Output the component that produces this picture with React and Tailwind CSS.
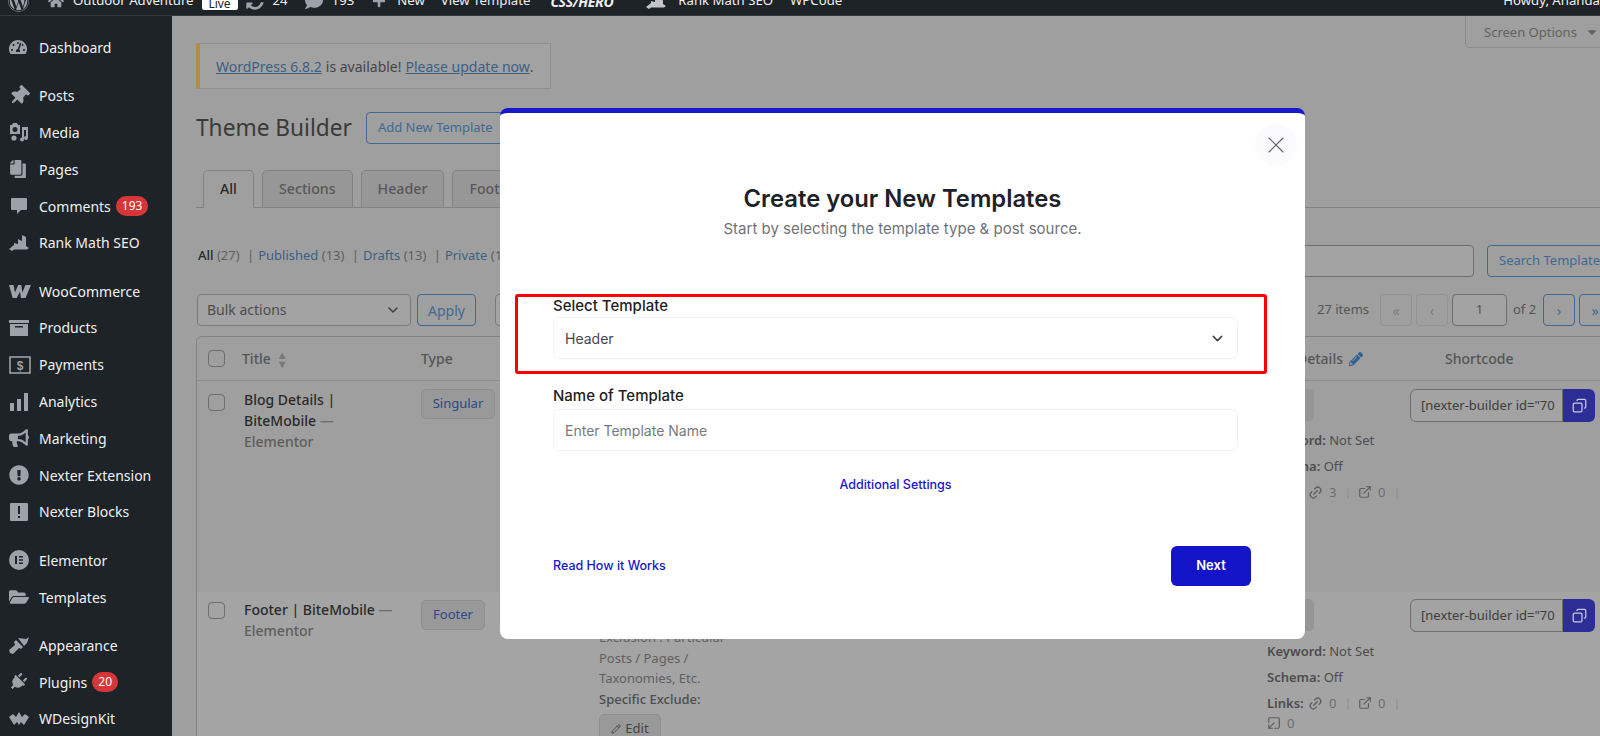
import React from 'react';
import { ChevronDown, X, Link2, ExternalLink, Copy, Pencil, ArrowDownLeftFromSquare } from 'lucide-react';
import {
    FaWordpress, FaHome, FaSyncAlt, FaComment, FaPlus, FaTachometerAlt, FaThumbtack, FaCopy,
    FaBullhorn, FaExclamationCircle, FaFolderOpen, FaPlug, FaPencilAlt, FaCaretDown,
} from 'react-icons/fa';

const RankIcon = ({ className }) => (
    <svg viewBox="0 0 20 20" className={className} fill="currentColor">
        <path d="M0 16l5-4v-2l4 1V6l4 2V2l4 2v9l3 2-2 1.500H5L3 18z" />
    </svg>
);
const MediaIcon = () => (
    <svg viewBox="0 0 20 20" className="w-5 h-5" fill="currentColor">
        <path d="M1 3h2l1-2h4l1 2h2v9H1zm5 2a2.500 2.500 0 100 5 2.500 2.500 0 000-5z" fillRule="evenodd" />
        <path d="M13 5h6v11a2 2 0 11-2-2V8h-2v9.500a2 2 0 11-2-2z" />
        <circle cx="5" cy="16" r="2.600" />
    </svg>
);
const CommentIcon = () => (
    <svg viewBox="0 0 20 20" className="w-5 h-5" fill="currentColor">
        <path d="M3 2h14a1 1 0 011 1v10a1 1 0 01-1 1h-5l-4 4v-4H3a1 1 0 01-1-1V3a1 1 0 011-1z" />
    </svg>
);
const WooIcon = () => (
    <svg viewBox="0 0 24 14" className="w-[22px] h-[13px]" fill="currentColor">
        <path d="M0 0h5l1.500 8L10 0h3.500l1 8L18 0h6l-6 14h-5l-1-7-3.500 7H4z" />
    </svg>
);
const BoxIcon = () => (
    <svg viewBox="0 0 20 20" className="w-5 h-5" fill="currentColor">
        <path d="M0 2h20v3H0zM1 6h18v12H1zm5 2v1.500h8V8z" fillRule="evenodd" />
    </svg>
);
const PaymentIcon = () => (
    <svg viewBox="0 0 22 18" className="w-[22px] h-[18px]">
        <rect x="1" y="1" width="20" height="16" fill="none" stroke="currentColor" strokeWidth="1.600" />
        <text x="11" y="14" textAnchor="middle" fontSize="12" fontWeight="700" fill="currentColor" fontFamily="Liberation Sans, sans-serif">$</text>
    </svg>
);
const BarsIcon = () => (
    <svg viewBox="0 0 20 20" className="w-5 h-5" fill="currentColor">
        <path d="M1 11h4v8H1zM8 7h4v12H8zM15 1h4v18h-4z" />
    </svg>
);
const SquareAlert = () => (
    <svg viewBox="0 0 20 20" className="w-5 h-5" fill="currentColor">
        <path fillRule="evenodd" d="M2 1h16a1 1 0 011 1v16a1 1 0 01-1 1H2a1 1 0 01-1-1V2a1 1 0 011-1zm7 3v8h2V4zm0 10v2h2v-2z" />
    </svg>
);
const ElementorIcon = () => (
    <svg viewBox="0 0 20 20" className="w-5 h-5" fill="currentColor">
        <path fillRule="evenodd" d="M10 0a10 10 0 100 20 10 10 0 000-20zM6 6h2v8H6zm4 0h4v1.600h-4zm0 3.200h4v1.600h-4zm0 3.200h4V14h-4z" />
    </svg>
);
const KitIcon = () => (
    <svg viewBox="0 0 20 14" className="w-5 h-[14px]" fill="currentColor">
        <path d="M0 5l4-3 3 3 3-5 3 5 3-3 4 3-5 8-3-3-2 3-2-3-3 3z" />
    </svg>
);
const BrushIcon = () => (
    <svg viewBox="0 0 20 20" className="w-5 h-5" fill="currentColor">
        <path d="M9 3l8 1 3-2-2 6-3 3zM7 5l7 7-2 2-2-1-6 6-3-1-1-3 6-5-1-3z" />
    </svg>
);

const menuGroups = [
    [{ label: 'Dashboard', icon: <FaTachometerAlt className="w-[18px] h-[18px]" /> }],
    [
        { label: 'Posts', icon: <FaThumbtack className="w-5 h-5 rotate-45" /> },
        { label: 'Media', icon: <MediaIcon /> },
        { label: 'Pages', icon: <FaCopy className="w-[18px] h-[18px] -scale-x-100" /> },
        { label: 'Comments', icon: <CommentIcon />, badge: '193' },
        { label: 'Rank Math SEO', icon: <RankIcon className="w-5 h-5" /> },
    ],
    [
        { label: 'WooCommerce', icon: <WooIcon /> },
        { label: 'Products', icon: <BoxIcon /> },
        { label: 'Payments', icon: <PaymentIcon /> },
        { label: 'Analytics', icon: <BarsIcon /> },
        { label: 'Marketing', icon: <FaBullhorn className="w-5 h-5" /> },
        { label: 'Nexter Extension', icon: <FaExclamationCircle className="w-5 h-5" /> },
        { label: 'Nexter Blocks', icon: <SquareAlert /> },
    ],
    [
        { label: 'Elementor', icon: <ElementorIcon /> },
        { label: 'Templates', icon: <FaFolderOpen className="w-5 h-5" /> },
    ],
    [
        { label: 'Appearance', icon: <BrushIcon /> },
        { label: 'Plugins', icon: <FaPlug className="w-[18px] h-[18px] rotate-45" />, badge: '20' },
        { label: 'WDesignKit', icon: <KitIcon /> },
    ],
];

const Sidebar = () => (
    <aside className="w-[172px] shrink-0 bg-[#1d2327] pt-[13px] flex flex-col gap-[11.500px] overflow-hidden">
        {menuGroups.map((group, i) => (
            <div key={i}>
                {group.map((item) => (
                    <div key={item.label} className="h-[36.800px] flex items-center">
                        <span className="w-[39px] pl-[9px] text-[#9ca2a7] flex items-center">{item.icon}</span>
                        <span className="text-[#f0f0f1] text-[14px] whitespace-nowrap">{item.label}</span>
                        {item.badge && (
                            <span className="ml-[5px] h-[20px] min-w-[23px] px-[6px] rounded-full bg-[#d63638] text-white text-[12px] flex items-center justify-center">
                                {item.badge}
                            </span>
                        )}
                    </div>
                ))}
            </div>
        ))}
    </aside>
);

const TopBar = () => (
    <div className="h-4 shrink-0 bg-[#1d2327] overflow-hidden border-b border-[#33383c]">
        <div className="h-8 -mt-[15px] flex items-center text-[13.200px] text-[#f0f0f1] whitespace-nowrap relative">
            <FaWordpress className="ml-2 w-[21px] h-[21px] text-[#9ca2a7]" />
            <FaHome className="ml-[19px] w-4 h-4 text-[#9ca2a7]" />
            <span className="ml-[9px]">Outdoor Adventure</span>
            <span className="ml-[8px] w-[36px] h-[17px] bg-white text-[#1d2327] rounded-[2px] text-[12px] flex items-end justify-center leading-none">Live</span>
            <FaSyncAlt className="ml-2 w-[18px] h-[18px] text-[#9ca2a7]" />
            <span className="ml-[9px]">24</span>
            <FaComment className="ml-[17px] w-[18px] h-[18px] text-[#9ca2a7]" />
            <span className="ml-[9px]">193</span>
            <FaPlus className="ml-[18px] w-[14px] h-[14px] text-[#9ca2a7]" />
            <span className="ml-[11px]">New</span>
            <span className="ml-[16px]">View Template</span>
            <span className="ml-[20px] text-[14px] font-bold italic tracking-tight">CSS/HERO</span>
            <RankIcon className="ml-[33px] w-5 h-5 text-[#c3c4c7]" />
            <span className="ml-[12px]">Rank Math SEO</span>
            <span className="ml-[17px]">WPCode</span>
            <span className="ml-auto">Howdy, Ananda</span>
        </div>
    </div>
);

const Tab = ({ children, active }) => (
    <div
        className={`h-[38px] px-[16px] -mb-px border border-[#838383] rounded-t-[5px] flex items-center text-[14.200px] font-medium ${
            active ? 'bg-[#9f9f9f] border-b-[#9f9f9f] text-[#2b2b2b]' : 'bg-[#979797] text-[#575757]'
        }`}
    >
        {children}
    </div>
);

const Pill = ({ children, className }) => (
    <div className={`h-[30px] rounded-[5px] border border-[#8f8f8f] bg-[#999999] flex items-center justify-center text-[13px] text-[#2a4a88] ${className}`}>
        {children}
    </div>
);

const ShortcodeBox = () => (
    <div className="flex h-[33px] w-[185px] -ml-px">
        <div className="w-[153px] border border-[#6f6f6f] rounded-l-[6px] bg-[#a3a3a3] pl-[10px] flex items-center text-[13px] text-[#3d3d3d] whitespace-nowrap overflow-hidden">
            [nexter-builder id="70
        </div>
        <div className="w-[32px] bg-[#2d2d96] rounded-r-[6px] flex items-center justify-center text-[#c9c9e6]">
            <Copy className="w-[15px] h-[15px] -scale-x-100" />
        </div>
    </div>
);

const Stat = ({ icon, value }) => (
    <span className="inline-flex items-center w-[50px] text-[#6d6d6d]">
        {icon}
        <span className="ml-[6px] w-[7px]">{value}</span>
        <span className="ml-[9px] text-[#8a8a8a] text-[11px]">|</span>
    </span>
);

const linkIcon = <Link2 className="w-[15px] h-[15px] -rotate-45 text-[#5d5d5d]" />;
const outIcon = <ExternalLink className="w-[14px] h-[14px] text-[#5d5d5d]" />;
const inIcon = <ArrowDownLeftFromSquare className="w-[14px] h-[14px] text-[#5d5d5d]" />;

const SeoInfo = ({ linksLabel, inbound }) => (
    <div className="text-[13px] text-[#4d4d4d] leading-[26px]">
        <div><b className="font-semibold">Keyword:</b> Not Set</div>
        <div><b className="font-semibold">Schema:</b> Off</div>
        <div className="flex items-center">
            <b className="font-semibold w-[41px]">Links:</b>
            <Stat icon={linkIcon} value={linksLabel} />
            <Stat icon={outIcon} value="0" />
        </div>
        {inbound && (
            <div className="-mt-[3px] flex items-center gap-[6px] leading-[20px] text-[#6d6d6d]">
                {inIcon}
                <span>0</span>
            </div>
        )}
    </div>
);

const rowGrid = 'grid grid-cols-[45px_179px_178px_668px_144px_1fr]';

const Table = () => (
    <div className="mt-[10px] w-[1430px] border border-[#838383] rounded-tl-[6px] text-[14px]">
        <div className={`${rowGrid} h-[44px] items-center border-b border-[#8c8c8c] font-medium text-[#555555]`}>
            <span className="ml-[11px] w-[17px] h-[17px] rounded-[4px] border border-[#6e6e6e]" />
            <span className="flex items-center gap-[6px]">
                Title
                <span className="flex flex-col text-[#777777] text-[11px] leading-[9px]"><span>▲</span><span>▼</span></span>
            </span>
            <span>Type</span>
            <span />
            <span className="flex items-center gap-[6px] -ml-[2px] justify-end pr-[48px]">
                <span className="whitespace-nowrap">Details</span>
                <FaPencilAlt className="w-[14px] h-[14px] text-[#2f5f94]" />
            </span>
            <span className="pl-[34px]">Shortcode</span>
        </div>

        <div className={`${rowGrid} h-[211px] pt-[8px] bg-[#9f9f9f]`}>
            <span className="ml-[11px] mt-[5px] w-[17px] h-[17px] rounded-[4px] border border-[#6e6e6e]" />
            <div className="pl-[2px] pr-[30px] leading-[21px]">
                <div className="font-medium text-[#2a2a2a]">Blog Details | BiteMobile <span className="text-[#6b6b6b]">—</span></div>
                <div className="font-medium text-[#5d5d5d]">Elementor</div>
            </div>
            <Pill className="w-[74px]">Singular</Pill>
            <span />
            <div>
                <div className="w-[47px] h-[32px] rounded-[5px] bg-[#959595]" />
                <div className="mt-[6px]"><SeoInfo linksLabel="3" /></div>
            </div>
            <ShortcodeBox />
        </div>

        <div className={`${rowGrid} h-[160px] pt-[7px] bg-[#a4a4a4]`}>
            <span className="ml-[11px] mt-[3px] w-[17px] h-[17px] rounded-[4px] border border-[#6e6e6e]" />
            <div className="pl-[2px] pr-[10px] leading-[21px]">
                <div className="font-medium text-[#2a2a2a]">Footer | BiteMobile <span className="text-[#6b6b6b]">—</span></div>
                <div className="font-medium text-[#5d5d5d]">Elementor</div>
            </div>
            <Pill className="w-[64px] mt-px">Footer</Pill>
            <div className="pt-[28px] text-[13px] leading-[20.700px] text-[#5f5f5f]">
                <div>Exclusion : Particular</div>
                <div>Posts / Pages /</div>
                <div>Taxonomies, Etc.</div>
                <div className="font-medium text-[#4d4d4d]">Specific Exclude:</div>
                <div className="mt-[4px] w-[62px] h-[30px] rounded-[5px] border border-[#8f8f8f] bg-[#999999] flex items-center justify-center gap-[4px] text-[#444444]">
                    <Pencil className="w-[10px] h-[10px]" />Edit
                </div>
            </div>
            <div>
                <div className="w-[47px] h-[32px] rounded-[5px] bg-[#959595]" />
                <div className="mt-[7px]"><SeoInfo linksLabel="0" inbound /></div>
            </div>
            <ShortcodeBox />
        </div>
    </div>
);

const PagerButton = ({ children, enabled }) => (
    <div className={`w-[32px] h-[32px] flex-none rounded-[4px] border flex items-center justify-center text-[14px] ${
        enabled ? 'border-[#3f6a94] text-[#3f6a94]' : 'border-[#939393] text-[#7d7d7d]'
    }`}>
        {children}
    </div>
);

const Content = () => (
    <main className="flex-1 relative bg-[#9f9f9f] pl-[24px] overflow-hidden">
        <div className="absolute right-0 top-0 w-[135px] h-[32px] border-l border-b border-[#8c8c8c] rounded-bl-[5px] bg-[#9f9f9f] pl-[18px] flex items-center gap-[8px] text-[13px] text-[#626262]">
            <span className="translate-y-px">Screen Options</span> <FaCaretDown className="w-[14px] h-[14px]" />
        </div>

        <div className="mt-[27px] w-[355px] h-[46px] border border-[#8f8f8f] border-l-4 border-l-[#b58a4b] bg-[#a2a2a2] pl-[16px] flex items-center text-[14px] text-[#454545]">
            <span className="underline text-[#3d5f80]">WordPress 6.8.2</span>
            <span className="ml-1">is available!</span>
            <span className="underline text-[#3d5f80] ml-1">Please update now</span>.
        </div>

        <div className="mt-[23px] flex items-center gap-[14px]">
            <h1 className="text-[22.700px] text-[#3a3a3a] leading-[32px]">Theme Builder</h1>
            <div className="h-[32px] px-[11px] border border-[#3f6a94] rounded-[4px] flex items-center text-[13px] text-[#3f6a94]">Add New Template</div>
        </div>

        <div className="mt-[26px] border-b border-[#838383] pl-[7px] flex gap-[8px]">
            <Tab active>All</Tab>
            <Tab>Sections</Tab>
            <Tab>Header</Tab>
            <Tab>Footer</Tab>
        </div>

        <div className="mt-[38px] h-[20px] flex items-center text-[13px] text-[#5f5f5f]">
            <div className="pl-[2px] whitespace-nowrap">
                <span className="font-medium text-[#2a2a2a]">All</span> (27) <span className="mx-1">|</span>
                <span className="text-[#3d5f80]">Published</span> (13) <span className="mx-1">|</span>
                <span className="text-[#3d5f80]">Drafts</span> (13) <span className="mx-1">|</span>
                <span className="text-[#3d5f80]">Private</span> (1)
            </div>
        </div>
        <div className="absolute right-[-10px] top-[229px] flex gap-[13px]">
            <div className="w-[300px] h-[32px] border border-[#6f6f6f] rounded-[4px] bg-[#a3a3a3]" />
            <div className="w-[123px] h-[32px] border border-[#3f6a94] rounded-[4px] pl-[11px] flex items-center text-[13px] text-[#3f6a94] whitespace-nowrap">Search Templates</div>
        </div>

        <div className="mt-[28px] h-[32px] flex items-center text-[14px]">
            <div className="ml-px w-[214px] h-[32px] border border-[#7a7a7a] rounded-[4px] bg-[#a3a3a3] px-[9px] flex items-center justify-between text-[#4d4d4d]">
                <span className="-translate-y-px">Bulk actions</span> <ChevronDown className="w-4 h-4 text-[#3a3a3a]" />
            </div>
            <div className="ml-[6px] w-[59px] h-[32px] border border-[#3f6a94] rounded-[4px] flex items-center justify-center text-[#3f6a94]">Apply</div>
            <div className="ml-[19px] w-[60px] h-[32px] border border-[#7a7a7a] rounded-[4px] bg-[#a3a3a3]" />
            <div className="ml-auto flex items-center gap-[4px] w-[283px] shrink-0 text-[#555555]">
                <span className="w-[59px] flex-none text-[13px] whitespace-nowrap">27 items</span>
                <PagerButton>«</PagerButton>
                <PagerButton>‹</PagerButton>
                <div className="w-[55px] h-[32px] flex-none border border-[#6f6f6f] rounded-[4px] bg-[#a3a3a3] flex items-center justify-center text-[13px]">1</div>
                <span className="w-[28px] flex-none pl-[2px] text-[13px] whitespace-nowrap">of 2</span>
                <PagerButton enabled>›</PagerButton>
                <PagerButton enabled>»</PagerButton>
            </div>
        </div>

        <Table />
    </main>
);

const Modal = () => (
    <div className="absolute left-[500px] top-[108px] w-[805px] h-[531px] bg-white rounded-[8px] border-t-[5px] border-[#1717cc] font-['Inter',sans-serif]">
        <div className="absolute right-[8px] top-[11px] w-[42px] h-[42px] rounded-full bg-[#fbfbfd] flex items-center justify-center text-[#5f6368]">
            <X className="w-[28px] h-[28px]" strokeWidth={1} />
        </div>

        <div className="pt-[70px] text-center">
            <h2 className="text-[23.800px] leading-[32px] font-semibold text-[#1e2127]">Create your New Templates</h2>
            <p className="mt-[3px] text-[15px] leading-[22px] text-[#6f7378]">Start by selecting the template type &amp; post source.</p>
        </div>

        <div className="mx-[15px] mt-[54px] h-[80px] border-[3px] border-[#ff0000] rounded-[3px] px-[35px] w-[752px]">
            <div className="text-[15px] leading-[20px] font-medium text-[#1e1e1e] -translate-y-px">Select Template</div>
            <div className="w-[685px] h-[42px] border border-[#f2f2f4] rounded-[6px] px-[11px] flex items-center justify-between text-[14px] text-[#44484e]">
                Header <ChevronDown className="w-[17px] h-[17px] text-[#3c4043]" strokeWidth={2} />
            </div>
        </div>

        <div className="ml-[53px] mt-[12px] w-[685px]">
            <div className="text-[15px] leading-[20px] font-medium text-[#1e1e1e]">Name of Template</div>
            <div className="mt-[3px] h-[42px] border border-[#f2f2f4] rounded-[6px] pl-[11px] flex items-center text-[14px] text-[#767a80]">Enter Template Name</div>
        </div>

        <div className="mt-[25px] pl-[53px] w-[738px] text-center text-[12.500px] leading-[18px] font-medium text-[#1717cc]">Additional Settings</div>

        <div className="mt-[52px] pl-[53px] pr-[54px] flex items-center justify-between">
            <span className="text-[12.500px] font-medium text-[#1717cc]">Read How it Works</span>
            <div className="w-[80px] h-[40px] rounded-[6px] bg-[#1414c8] text-white text-[13px] font-semibold flex items-center justify-center">Next</div>
        </div>
    </div>
);

const App = () => (
    <div className="relative w-[1600px] h-[736px] overflow-hidden flex flex-col font-['Noto_Sans',sans-serif] bg-[#9f9f9f]">
        <TopBar />
        <div className="flex flex-1 min-h-0">
            <Sidebar />
            <Content />
        </div>
        <Modal />
    </div>
);

export default App;
